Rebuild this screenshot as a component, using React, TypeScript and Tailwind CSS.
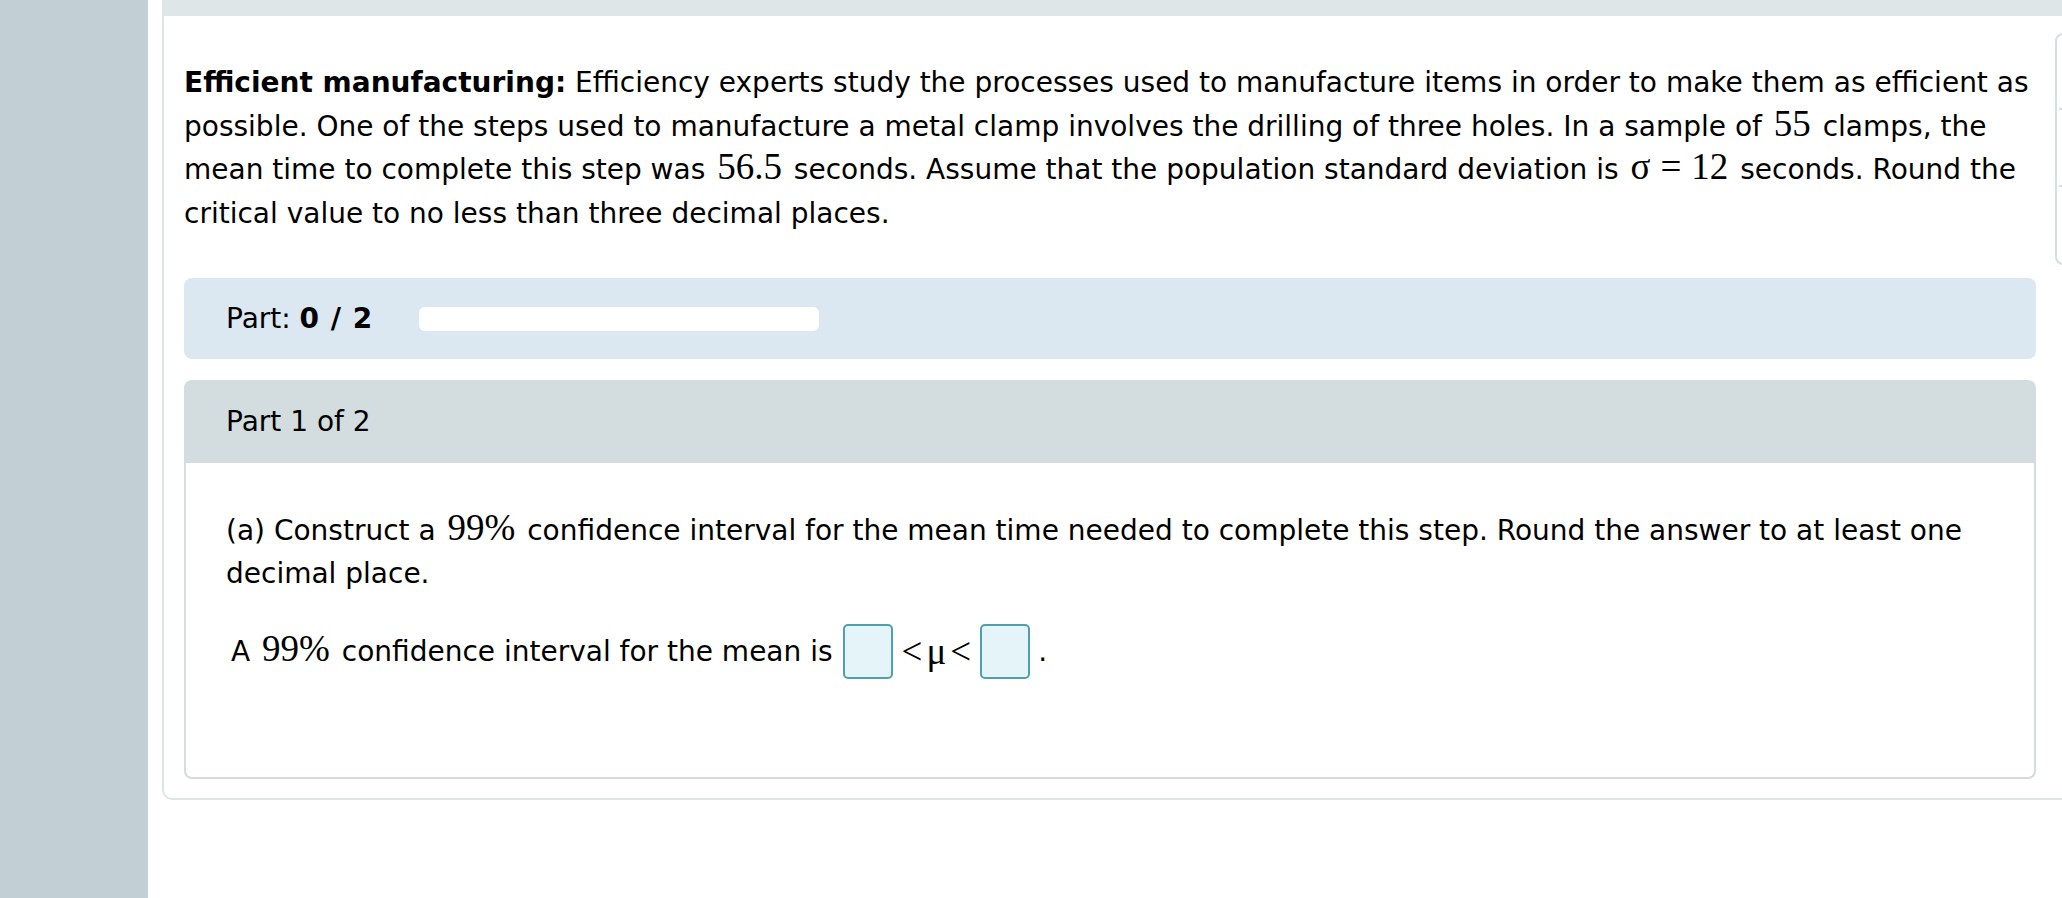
import type { ReactNode } from "react";

function M({ children }: { children: ReactNode }) {
  return <span className="mx-[3px] font-['Liberation_Serif',serif] text-[37px] leading-[0px]">{children}</span>;
}

function AnswerBox() {
  return <span className="inline-block h-[55px] w-[50px] rounded-[5px] border-2 border-[#4f9fac] bg-[#e5f4f8]" />;
}

export default function App() {
  return (
    <div className="flex h-[898px] w-[2062px] overflow-hidden bg-white font-['DejaVu_Sans',sans-serif] text-[28px] text-black">
      <aside className="w-[148px] shrink-0 bg-[#c2d0d5]" />

      <div className="ml-[14px] flex min-w-0 flex-1 flex-col">
        <div className="h-[16px] w-[1960px] shrink-0 bg-[#dfe6e8]" />

        <div className="flex w-[1960px] shrink-0 rounded-bl-[10px] border-b-2 border-l-2 border-[#dde5e8] pb-[19px]">
          <div className="ml-[20px] w-[1852px] shrink-0">
            <p className="pt-[45px] leading-[43.5px]">
              <b>Efficient manufacturing:</b> Efficiency experts study the processes used to manufacture items in
              order to make them as efficient as possible. One of the steps used to manufacture a metal clamp involves
              the drilling of three holes. In a sample of <M>55</M> clamps, the mean time to complete this step was{" "}
              <M>56.5</M> seconds. Assume that the population standard deviation is{" "}
              <M>
                σ<span className="mx-[10px]">=</span>12
              </M>{" "}
              seconds. Round the critical value to no less than three decimal places.
            </p>

            <div className="mt-[43px] flex h-[81px] items-center rounded-[8px] bg-[#dce8f1] pl-[42px]">
              <span>
                Part: <b className="tracking-[1px]">0 / 2</b>
              </span>
              <div className="ml-[46px] h-[24px] w-[400px] rounded-[6px] bg-white" />
            </div>

            <div className="mt-[21px]">
              <div className="flex h-[83px] items-center rounded-t-[8px] bg-[#d3dcdf] pl-[42px]">Part 1 of 2</div>
              <div className="h-[316px] rounded-b-[8px] border-2 border-t-0 border-[#d3dcdf] px-[40px] pt-[46px]">
                <p className="leading-[43px]">
                  (a) Construct a <M>99%</M> confidence interval for the mean time needed to complete this step. Round
                  the answer to at least one decimal place.
                </p>
                <div className="mt-[29px] flex h-[55px] items-center pl-[5px]">
                  <span className="whitespace-pre">
                    A <M>99%</M> confidence interval for the mean is
                  </span>
                  <span className="ml-[10px] flex">
                    <AnswerBox />
                  </span>
                  <span className="mx-[9px] font-['Liberation_Serif',serif] text-[37px] leading-none">
                    &lt;<span className="mx-[4px]">μ</span>&lt;
                  </span>
                  <AnswerBox />
                  <span className="ml-[8px]">.</span>
                </div>
              </div>
            </div>
          </div>

          <div className="relative ml-[19px] mt-[17px] h-[232px] w-[120px] shrink-0 rounded-[8px] border-2 border-[#d5dee1]">
            <div className="absolute left-[2px] top-[73px] h-[2px] w-[4px] bg-[#d5dee1]" />
            <div className="absolute left-[2px] top-[150px] h-[2px] w-[4px] bg-[#d5dee1]" />
          </div>
        </div>
      </div>
    </div>
  );
}
